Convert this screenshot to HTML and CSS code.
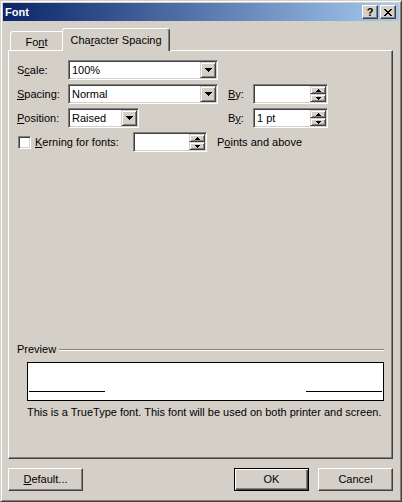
FILE: index.html
```html
<!DOCTYPE html>
<html>
<head>
<meta charset="utf-8">
<title>Font</title>
<link rel="stylesheet" href="styles.css">
</head>
<body>
<div class="window">
  <div class="titlebar">
    <span class="title">Font</span>
    <div class="tb-buttons">
      <span class="tb-btn help">?</span>
      <span class="tb-btn close"><svg width="8" height="7" viewBox="0 0 8 7"><path d="M0 0h2v1H0zM6 0h2v1H6zM1 1h2v1H1zM5 1h2v1H5zM2 2h4v1H2zM3 3h2v1H3zM2 4h4v1H2zM1 5h2v1H1zM5 5h2v1H5zM0 6h2v1H0zM6 6h2v1H6z"/></svg></span>
    </div>
  </div>
  <div class="body">
    <div class="tabs">
      <div class="tab">Fo<u>n</u>t</div>
      <div class="tab active">Cha<u>r</u>acter Spacing</div>
    </div>
    <div class="panel">
      <div class="grid">
        <span class="lbl first">S<u>c</u>ale:</span>
        <div class="combo wide"><span class="val">100%</span><span class="drop"><svg width="7" height="4" viewBox="0 0 7 4"><path d="M0 0h7v1H0zM1 1h5v1H1zM2 2h3v1H2zM3 3h1v1H3z"/></svg></span></div>

        <span class="lbl first"><u>S</u>pacing:</span>
        <div class="combo wide"><span class="val">Normal</span><span class="drop"><svg width="7" height="4" viewBox="0 0 7 4"><path d="M0 0h7v1H0zM1 1h5v1H1zM2 2h3v1H2zM3 3h1v1H3z"/></svg></span></div>
        <span class="lbl"><u>B</u>y:</span>
        <div class="spin"><span class="val"></span><span class="spin-btns"><span class="sbtn"><svg width="5" height="3" viewBox="0 0 5 3"><path d="M2 0h1v1H2zM1 1h3v1H1zM0 2h5v1H0z"/></svg></span><span class="sbtn"><svg width="5" height="3" viewBox="0 0 5 3"><path d="M0 0h5v1H0zM1 1h3v1H1zM2 2h1v1H2z"/></svg></span></span></div>

        <span class="lbl first"><u>P</u>osition:</span>
        <div class="combo short"><span class="val">Raised</span><span class="drop"><svg width="7" height="4" viewBox="0 0 7 4"><path d="M0 0h7v1H0zM1 1h5v1H1zM2 2h3v1H2zM3 3h1v1H3z"/></svg></span></div>
        <span class="lbl">B<u>y</u>:</span>
        <div class="spin"><span class="val">1 pt</span><span class="spin-btns"><span class="sbtn"><svg width="5" height="3" viewBox="0 0 5 3"><path d="M2 0h1v1H2zM1 1h3v1H1zM0 2h5v1H0z"/></svg></span><span class="sbtn"><svg width="5" height="3" viewBox="0 0 5 3"><path d="M0 0h5v1H0zM1 1h3v1H1zM2 2h1v1H2z"/></svg></span></span></div>
      </div>

      <div class="kern">
        <span class="check"></span>
        <span class="kern-lbl"><u>K</u>erning for fonts:</span>
        <div class="spin kspin"><span class="val"></span><span class="spin-btns"><span class="sbtn"><svg width="5" height="3" viewBox="0 0 5 3"><path d="M2 0h1v1H2zM1 1h3v1H1zM0 2h5v1H0z"/></svg></span><span class="sbtn"><svg width="5" height="3" viewBox="0 0 5 3"><path d="M0 0h5v1H0zM1 1h3v1H1zM2 2h1v1H2z"/></svg></span></span></div>
        <span class="points">P<u>o</u>ints and above</span>
      </div>

      <div class="preview">
        <div class="group-head"><span>Preview</span><span class="etch"></span></div>
        <div class="preview-box"><span class="pline"></span><span class="pline"></span></div>
        <p class="note">This is a TrueType font. This font will be used on both printer and screen.</p>
      </div>
    </div>
    <div class="buttons">
      <button class="btn"><u>D</u>efault...</button>
      <div class="btn-group">
        <button class="btn default">OK</button>
        <button class="btn">Cancel</button>
      </div>
    </div>
  </div>
</div>
</body>
</html>
```

FILE: styles.css
```css
* { box-sizing: border-box; }
html, body { margin: 0; padding: 0; }
body {
  width: 402px;
  height: 502px;
  overflow: hidden;
  background: #d4d0c8;
  font-family: "Liberation Sans", Arial, sans-serif;
  font-size: 11px;
  line-height: 13px;
  color: #000;
}
u { text-underline-offset: 1px; }

.window {
  width: 402px;
  height: 502px;
  border: 1px solid;
  border-color: #d4d0c8 #404040 #404040 #d4d0c8;
  box-shadow: inset 1px 1px #fff, inset -1px -1px #808080;
  padding: 2px;
  display: flex;
  flex-direction: column;
  background: #d4d0c8;
}

.titlebar {
  height: 18px;
  flex: none;
  background: linear-gradient(to right, #0a246a, #a6caf0);
  display: flex;
  align-items: center;
  justify-content: space-between;
  padding: 0 3px 0 2px;
}
.title { color: #fff; font-weight: bold; }
.tb-buttons { display: flex; gap: 2px; }
.tb-btn {
  width: 16px;
  height: 14px;
  background: #d4d0c8;
  border: 1px solid;
  border-color: #fff #404040 #404040 #fff;
  box-shadow: inset -1px -1px #808080;
  display: flex;
  align-items: center;
  justify-content: center;
  font-weight: bold;
  font-size: 11px;
  line-height: 11px;
}
.tb-btn svg { display: block; }

.body {
  flex: 1;
  display: flex;
  flex-direction: column;
  padding: 0 6px 0 5px;
}

.tabs {
  margin-top: 7px;
  height: 22px;
  flex: none;
  display: flex;
  align-items: flex-end;
  padding-left: 2px;
}
.tab {
  width: 52px;
  height: 19px;
  border: 1px solid #fff;
  border-right: none;
  border-bottom: none;
  border-radius: 3px 0 0 0;
  padding-top: 4px;
  text-align: center;
}
.tab.active {
  width: 108px;
  height: 23px;
  margin-bottom: -1px;
  border-right: 1px solid #404040;
  border-radius: 3px 3px 0 0;
  box-shadow: inset -1px 0 #808080;
  padding-top: 5px;
  background: #d4d0c8;
  position: relative;
  z-index: 1;
}

.panel {
  height: 409px;
  flex: none;
  border: 1px solid;
  border-color: #fff #404040 #404040 #fff;
  box-shadow: inset -1px -1px #808080;
  padding: 9px 8px 39px 8px;
  display: flex;
  flex-direction: column;
}

.grid {
  display: grid;
  grid-template-columns: 51px 160px 25px 75px;
  grid-auto-rows: 20px;
  row-gap: 4px;
  align-items: center;
}
.lbl.first { grid-column: 1; }

.combo, .spin {
  height: 20px;
  border: 1px solid;
  border-color: #808080 #fff #fff #808080;
  box-shadow: inset 1px 1px #404040, inset -1px -1px #d4d0c8;
  background: #fff;
  display: flex;
  align-items: center;
  padding: 1px;
  justify-self: start;
}
.combo.wide { width: 150px; }
.combo.short { width: 71px; }
.spin { width: 75px; }
.spin.kspin { width: 74px; }
.val { flex: 1; padding-left: 2px; white-space: nowrap; }

.drop {
  width: 16px;
  height: 16px;
  flex: none;
  background: #d4d0c8;
  border: 1px solid;
  border-color: #d4d0c8 #404040 #404040 #d4d0c8;
  box-shadow: inset 1px 1px #fff, inset -1px -1px #808080;
  display: flex;
  align-items: center;
  justify-content: center;
}
.drop svg, .sbtn svg { display: block; }

.spin-btns {
  width: 16px;
  height: 16px;
  flex: none;
  display: flex;
  flex-direction: column;
}
.sbtn {
  height: 8px;
  background: #d4d0c8;
  border: 1px solid;
  border-color: #d4d0c8 #404040 #404040 #d4d0c8;
  box-shadow: inset 1px 1px #fff, inset -1px -1px #808080;
  display: flex;
  align-items: center;
  justify-content: center;
}

.kern {
  display: flex;
  align-items: center;
  height: 20px;
  margin-top: 4px;
}
.check {
  width: 13px;
  height: 13px;
  flex: none;
  margin-left: 1px;
  border: 1px solid;
  border-color: #808080 #fff #fff #808080;
  box-shadow: inset 1px 1px #404040, inset -1px -1px #d4d0c8;
  background: #fff;
}
.kern-lbl { width: 98px; margin-left: 4px; flex: none; }
.points { margin-left: 10px; }

.preview { margin-top: auto; }
.group-head {
  display: flex;
  align-items: center;
  height: 13px;
}
.etch {
  flex: 1;
  height: 2px;
  margin-left: 3px;
  border-top: 1px solid #808080;
  border-bottom: 1px solid #fff;
}
.preview-box {
  margin: 6px 0 0 10px;
  height: 39px;
  border: 1px solid #000;
  background: #fff;
  display: flex;
  justify-content: space-between;
  align-items: flex-end;
  padding: 0 1px 8px 1px;
}
.pline { width: 76px; height: 1px; background: #000; }
.note { margin: 5px 0 0 10px; white-space: nowrap; }

.buttons {
  margin-top: 9px;
  height: 23px;
  flex: none;
  display: flex;
  justify-content: space-between;
}
.btn-group { display: flex; gap: 9px; }
.btn {
  width: 75px;
  height: 23px;
  padding: 0;
  font: inherit;
  color: #000;
  background: #d4d0c8;
  border: 1px solid;
  border-color: #fff #404040 #404040 #fff;
  box-shadow: inset -1px -1px #808080;
  border-radius: 0;
}
.btn.default {
  border-color: #000;
  box-shadow: inset 1px 1px #fff, inset -1px -1px #404040, inset -2px -2px #808080;
}
```
